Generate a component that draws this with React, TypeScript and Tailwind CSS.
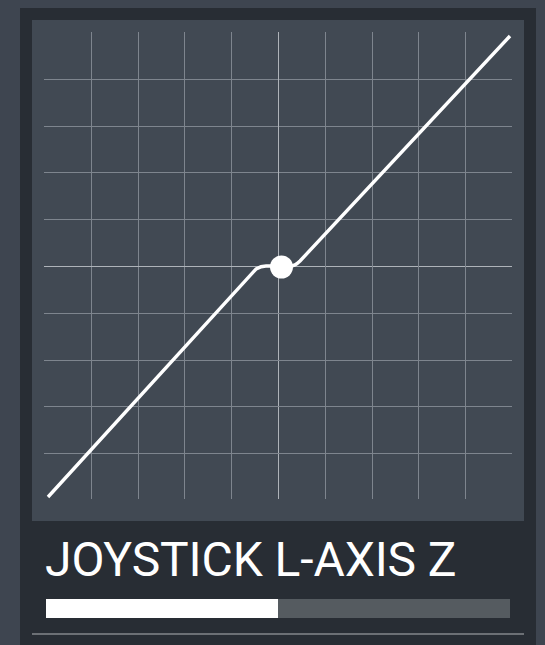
const ticks = [1, 2, 3, 4, 5, 6, 7, 8, 9];
const step = 46.8;

function Chart() {
    return (
        <svg width="492" height="501" viewBox="0 0 492 501" className="block">
            {ticks.map((k) => {
                const p = Math.round(12 + step * k) + 0.5;
                const center = k === 5;
                return (
                    <g key={k} stroke={center ? '#aeb3b9' : '#7e858e'} strokeWidth="1">
                        <line x1={p} y1={12} x2={p} y2={479} />
                        <line x1={12} y1={p} x2={480} y2={p} />
                    </g>
                );
            })}
            <path
                d="M16 477 L224 249 Q229 246 234 246 L258 246 Q263 246 268 241 L478 16"
                fill="none"
                stroke="#ffffff"
                strokeWidth="3.4"
            />
            <circle cx="249.5" cy="247" r="11.5" fill="#ffffff" />
        </svg>
    );
}

export default function App() {
    const value = 0.5;

    return (
        <div className="w-[545px] h-[645px] overflow-hidden bg-[#3e4550] pt-[8px] pl-[20px]">
            <div className="w-[516px] h-[700px] bg-[#282d34] px-[12px] pt-[12px] flex flex-col">
                <div className="w-[492px] h-[501px] bg-[#414953]">
                    <Chart />
                </div>
                <div
                    className="mt-[15px] pl-[13px] text-[48px] leading-none text-white tracking-[-0.1px]"
                    style={{ fontFamily: 'Roboto, "Liberation Sans", sans-serif' }}
                >
                    JOYSTICK L-AXIS Z
                </div>
                <div className="mt-[15px] ml-[14px] w-[464px] h-[19px] bg-[#555b60] flex">
                    <div className="h-full bg-white" style={{ width: `${value * 100}%` }} />
                </div>
                <div className="mt-[15px] w-[492px] h-[2px] bg-[#6c7075]" />
            </div>
        </div>
    );
}
